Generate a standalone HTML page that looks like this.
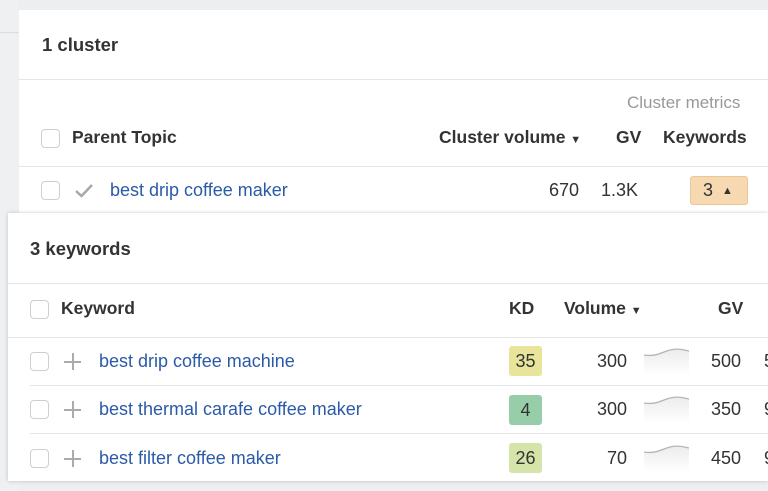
<!DOCTYPE html>
<html><head><meta charset="utf-8"><style>
*{margin:0;padding:0;box-sizing:border-box}
body{width:768px;height:491px;overflow:hidden;background:#eceef0;font-family:"Liberation Sans",Arial,sans-serif;color:#333;position:relative}
.a{position:absolute;white-space:nowrap}
.b{font-weight:bold}
.h{font-weight:bold;font-size:17.5px}
.t{font-weight:bold;font-size:18.5px}
.cb{position:absolute;width:19px;height:19px;border:1.5px solid #cfcfcf;border-radius:4px;background:#fff}
.l{color:#2a5aa8;font-size:18px}
.n{font-size:18px;color:#333;text-align:right}
.line{position:absolute;height:1px;background:#e6e6e6}
.kd{position:absolute;width:33px;height:30px;border-radius:3px;text-align:center;line-height:30px;font-size:18px;color:#333}
.plus{position:absolute;width:17px;height:17px}
.plus:before{content:"";position:absolute;left:7.5px;top:0;width:2px;height:17px;background:#ababab}
.plus:after{content:"";position:absolute;left:0;top:7.5px;width:17px;height:2px;background:#ababab}
</style></head><body>
<div class="a" style="left:0;top:0;width:19px;height:491px;background:#eef0f2"></div>
<div class="a" style="left:0;top:32px;width:19px;height:1px;background:#dcdcdc"></div>
<div class="a" style="left:19px;top:10px;width:749px;height:203px;background:#fff"></div>
<div class="a t" style="left:42px;top:34px">1 cluster</div>
<div class="line" style="left:19px;top:79px;width:749px"></div>
<div class="a" style="left:627px;top:93px;font-size:17px;color:#999">Cluster metrics</div>
<div class="cb" style="left:41px;top:129px"></div>
<div class="a h" style="left:72px;top:127px">Parent Topic</div>
<div class="a h" style="left:439px;top:127px">Cluster volume <span style="font-size:11px">▼</span></div>
<div class="a h" style="left:616px;top:127px">GV</div>
<div class="a h" style="left:663px;top:127px">Keywords</div>
<div class="line" style="left:19px;top:166px;width:749px"></div>
<div class="cb" style="left:41px;top:181px"></div>
<svg class="a" style="left:74px;top:182px" width="20" height="17"><path d="M2 9 L7.5 14 L18 3" fill="none" stroke="#a8a8a8" stroke-width="2.5"/></svg>
<div class="a l" style="left:110px;top:180px">best drip coffee maker</div>
<div class="a n" style="left:545px;top:180px;width:34px">670</div>
<div class="a n" style="left:601px;top:180px">1.3K</div>
<div class="a" style="left:690px;top:176px;width:58px;height:29px;background:#f6d9b0;border:1px solid #ecc694;border-radius:3px;font-size:18px;line-height:27px;padding-left:12px">3 <span style="font-size:11px;position:relative;top:-2px;left:4px">▲</span></div>
<div class="a" style="left:8px;top:213px;width:760px;height:268px;background:#fff;box-shadow:0 0 4px rgba(0,0,0,.2)"></div>
<div class="a t" style="left:30px;top:238px">3 keywords</div>
<div class="line" style="left:8px;top:283px;width:760px"></div>
<div class="cb" style="left:30px;top:300px"></div>
<div class="a h" style="left:61px;top:298px">Keyword</div>
<div class="a h" style="left:509px;top:298px">KD</div>
<div class="a h" style="left:564px;top:298px">Volume <span style="font-size:11px">▼</span></div>
<div class="a h" style="left:718px;top:298px">GV</div>
<div class="line" style="left:8px;top:337px;width:760px"></div>

<div class="cb" style="left:30px;top:352px"></div><div class="plus" style="left:64px;top:353px"></div>
<div class="a l" style="left:99px;top:351px">best drip coffee machine</div>
<div class="kd" style="left:509px;top:346px;background:#e8e49a">35</div>
<div class="a n" style="left:590px;top:351px;width:37px">300</div>
<svg class="a" style="left:644px;top:347px" width="45" height="28"><defs><linearGradient id="g" x1="0" y1="0" x2="0" y2="1"><stop offset="0" stop-color="#ececec"/><stop offset="1" stop-color="#fff"/></linearGradient></defs><path d="M0 8 C12 10 18 5 26 3 C34 1 40 3 45 4 L45 28 L0 28Z" fill="url(#g)"/><path d="M0 8 C12 10 18 5 26 3 C34 1 40 3 45 4" fill="none" stroke="#b5b5b5" stroke-width="1.3"/></svg>
<div class="a n" style="left:711px;top:351px">500</div>
<div class="a n" style="left:764px;top:351px">5</div>
<div class="line" style="left:30px;top:385px;width:738px"></div>

<div class="cb" style="left:30px;top:400px"></div><div class="plus" style="left:64px;top:401px"></div>
<div class="a l" style="left:99px;top:399px">best thermal carafe coffee maker</div>
<div class="kd" style="left:509px;top:395px;background:#97cea9">4</div>
<div class="a n" style="left:590px;top:399px;width:37px">300</div>
<svg class="a" style="left:644px;top:395px" width="45" height="28"><path d="M0 8 C12 10 18 5 26 3 C34 1 40 3 45 4 L45 28 L0 28Z" fill="url(#g)"/><path d="M0 8 C12 10 18 5 26 3 C34 1 40 3 45 4" fill="none" stroke="#b5b5b5" stroke-width="1.3"/></svg>
<div class="a n" style="left:711px;top:399px">350</div>
<div class="a n" style="left:764px;top:399px">9</div>
<div class="line" style="left:30px;top:433px;width:738px"></div>

<div class="cb" style="left:30px;top:449px"></div><div class="plus" style="left:64px;top:450px"></div>
<div class="a l" style="left:99px;top:448px">best filter coffee maker</div>
<div class="kd" style="left:509px;top:443px;background:#d5e4a9">26</div>
<div class="a n" style="left:590px;top:448px;width:37px">70</div>
<svg class="a" style="left:644px;top:444px" width="45" height="28"><path d="M0 8 C12 10 18 5 26 3 C34 1 40 3 45 4 L45 28 L0 28Z" fill="url(#g)"/><path d="M0 8 C12 10 18 5 26 3 C34 1 40 3 45 4" fill="none" stroke="#b5b5b5" stroke-width="1.3"/></svg>
<div class="a n" style="left:711px;top:448px">450</div>
<div class="a n" style="left:764px;top:448px">9</div>
</body></html>
